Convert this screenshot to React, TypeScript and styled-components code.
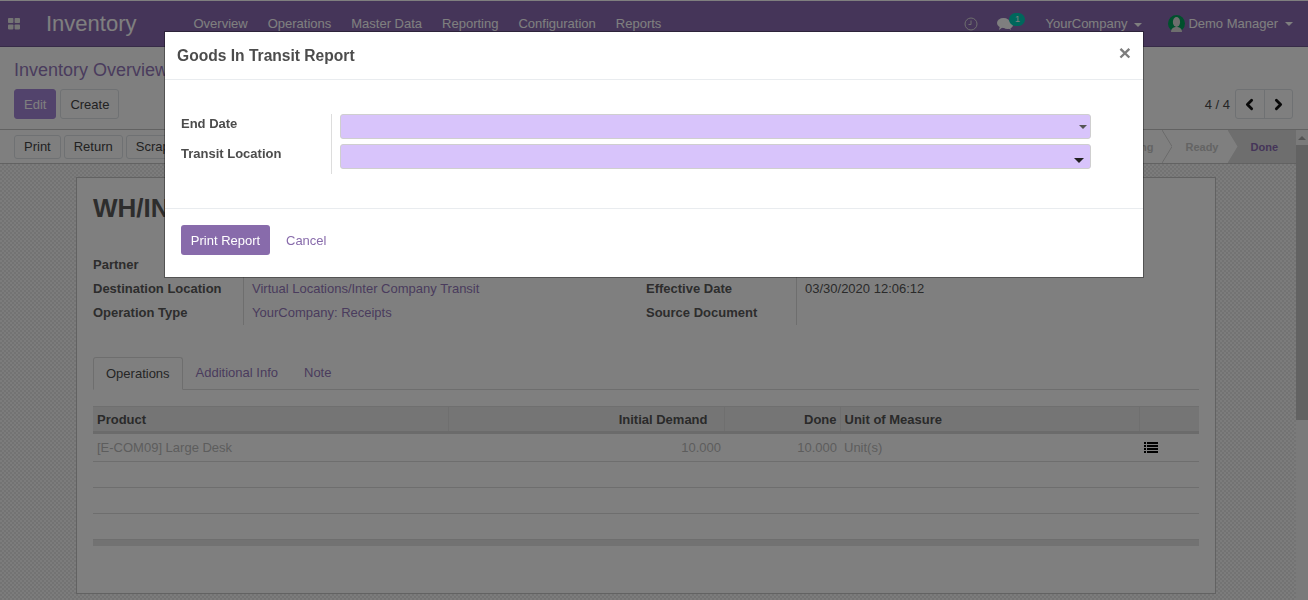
import React from "react";
import styled, { createGlobalStyle } from "styled-components";
import { ChevronLeft, ChevronRight } from "lucide-react";

const GlobalStyle = createGlobalStyle`
  html, body {
    margin: 0;
    height: 600px;
    overflow: hidden;
    background: #fff;
    font-family: "Liberation Sans", Arial, sans-serif;
    font-size: 13px;
    color: #4c4c4c;
  }
  * { box-sizing: border-box; }
`;

const Page = styled.div`
  display: flex;
  flex-direction: column;
  height: 600px;
  width: 1308px;
  overflow: hidden;
`;

const Navbar = styled.div`
  height: 46px;
  flex: none;
  margin-top: 1px;
  padding: 0 0 0 8px;
  display: flex;
  align-items: center;
  background: #8a6bb2;
  border-bottom: 1px solid #6f5690;
  color: #fff;
`;

const AppsIcon = styled.svg`
  width: 12px;
  height: 12px;
  fill: #e8e8e8;
  flex: none;
`;

const Brand = styled.div`
  font-size: 22px;
  margin-left: 26px;
  width: 147.5px;
`;

const MenuItem = styled.span`
  margin-right: 20px;
`;

const NavRight = styled.div`
  margin-left: auto;
  display: flex;
  align-items: center;
`;

const Caret = styled.span`
  display: inline-block;
  border-left: 4px solid transparent;
  border-right: 4px solid transparent;
  border-top: 4px solid currentColor;
  vertical-align: middle;
  margin-left: 7px;
`;

const ChatWrap = styled.span`
  position: relative;
  display: inline-flex;
  margin: 0 32px 0 19px;
`;

const Badge = styled.span`
  position: absolute;
  top: -4px;
  left: 12px;
  width: 16px;
  height: 13px;
  border-radius: 7px;
  background: #00ceb8;
  font-size: 9px;
  line-height: 13px;
  text-align: center;
`;

const NavCompany = styled.span`
  margin-right: 26px;
`;

const Avatar = styled.svg`
  width: 17px;
  height: 17px;
  margin-right: 3px;
  flex: none;
`;

const NavUser = styled.span`
  margin-right: 15px;
  display: flex;
  align-items: center;
`;

const ControlPanel = styled.div`
  flex: none;
  height: 83px;
  padding: 12px 15px 0 14px;
  border-bottom: 1px solid #c4c4c4;
  background: #fff;
`;

const Breadcrumb = styled.div`
  font-size: 18px;
  line-height: 22px;
  color: #9478bb;
`;

const PanelRow = styled.div`
  display: flex;
  align-items: center;
  margin-top: 8px;
`;

const Btn = styled.button<{ $primary?: boolean }>`
  height: 30px;
  padding: 0 9px;
  font: inherit;
  border-radius: 3px;
  margin-right: 4px;
  border: 1px solid ${(p) => (p.$primary ? "#a587d8" : "#dee2e6")};
  background: ${(p) => (p.$primary ? "#a587d8" : "#fff")};
  color: ${(p) => (p.$primary ? "#fff" : "#444")};
`;

const Pager = styled.div`
  margin-left: auto;
  display: flex;
  align-items: center;
  color: #4c4c4c;
`;

const PagerCount = styled.span`
  margin-right: 5px;
`;

const PagerGroup = styled.div`
  display: flex;
  width: 58px;
  height: 30px;
  border: 1px solid #dee2e6;
  border-radius: 3px;
`;

const PagerBtn = styled.div<{ $first?: boolean }>`
  flex: 1;
  display: flex;
  align-items: center;
  justify-content: center;
  border-right: ${(p) => (p.$first ? "1px solid #dee2e6" : "0")};
`;

const Main = styled.div`
  flex: 1;
  min-height: 0;
  display: flex;
`;

const Content = styled.div`
  flex: 1;
  min-width: 0;
  display: flex;
  flex-direction: column;
`;

const Scrollbar = styled.div`
  flex: none;
  width: 12px;
  background: #f5f5f5;
  padding-top: 6px;
`;

const ScrollArrow = styled.div`
  width: 0;
  height: 0;
  margin: 0 auto 5px;
  border-left: 4px solid transparent;
  border-right: 4px solid transparent;
  border-bottom: 4px solid #a8a8a8;
`;

const ScrollThumb = styled.div`
  height: 275px;
  background: #c4c4c4;
`;

const StatusRow = styled.div`
  flex: none;
  height: 34px;
  display: flex;
  align-items: center;
  padding-left: 14px;
  border-bottom: 1px solid #c4c4c4;
  background: #fff;
`;

const SmallBtn = styled.button`
  height: 24px;
  padding: 0 9px;
  font: inherit;
  border: 1px solid #dee2e6;
  border-radius: 3px;
  background: #fff;
  color: #444;
  margin-right: 3px;
`;

const StatusBar = styled.div`
  margin-left: auto;
  display: flex;
  height: 33px;
  font-size: 11px;
  font-weight: bold;
`;

const StatusStep = styled.div<{ $active?: boolean }>`
  position: relative;
  display: flex;
  align-items: center;
  padding: 0 ${(p) => (p.$active ? "18px" : "9px")} 0 23px;
  background: ${(p) => (p.$active ? "#dcdcdc" : "transparent")};
  color: ${(p) => (p.$active ? "#8a6bb2" : "#c8c8c8")};
  clip-path: ${(p) =>
    p.$active ? "polygon(0 0, 100% 0, 100% 100%, 0 100%, 10px 50%)" : "none"};
`;

const StepChevron = styled.svg`
  position: absolute;
  top: 0;
  right: -10px;
  width: 10px;
  height: 33px;
`;

const FormArea = styled.div`
  flex: 1;
  min-height: 0;
  padding: 13px 78px 0 76px;
  background-color: #f9f9f9;
  background-image: conic-gradient(#e6e6e6 25%, transparent 0 50%, #e6e6e6 0 75%, transparent 0);
  background-size: 4px 4px;
`;

const Sheet = styled.div`
  width: 1140px;
  height: 417px;
  padding: 0 16px;
  background: #fff;
  border: 1px solid #c4c4c4;
`;

const Title = styled.h1`
  margin: 14px 0 0;
  font-size: 26px;
  line-height: 33px;
  color: #5a5a5a;
`;

const Groups = styled.div`
  display: flex;
  margin-top: 28px;
`;

const Group = styled.div<{ $width: number }>`
  width: ${(p) => p.$width}px;
  display: grid;
  grid-template-columns: 151px 1fr;
  grid-auto-rows: 24px;
`;

const FieldLabel = styled.div`
  font-weight: bold;
  color: #5a5a5a;
  line-height: 24px;
  border-right: 1px solid #ddd;
`;

const FieldValue = styled.div`
  padding-left: 8px;
  line-height: 24px;
  color: #555;
`;

const FieldLink = styled(FieldValue)`
  color: #9478bb;
`;

const Tabs = styled.div`
  display: flex;
  margin-top: 32px;
  height: 33px;
  border-bottom: 1px solid #ddd;
`;

const Tab = styled.div<{ $active?: boolean }>`
  height: 33px;
  line-height: 32px;
  padding: 0 ${(p) => (p.$active ? "12px" : "13px")};
  color: ${(p) => (p.$active ? "#4c4c4c" : "#9478bb")};
  ${(p) =>
    p.$active
      ? "background:#fff;border:1px solid #ddd;border-bottom-color:#fff;border-radius:3px 3px 0 0;"
      : ""}
`;

const Table = styled.table`
  width: 1106px;
  margin-top: 16px;
  border-collapse: collapse;
  table-layout: fixed;
`;

const Th = styled.th<{ $right?: boolean; $sortPad?: boolean }>`
  height: 26px;
  padding: 0 ${(p) => (p.$sortPad ? "16px" : p.$right ? "3px" : "4px")} 0 4px;
  background: #ebebeb;
  border: 1px solid #dfdfdf;
  border-width: 1px 1px 3px 0;
  border-bottom-color: #d6d6d6;
  color: #555;
  font-size: 13px;
  text-align: ${(p) => (p.$right ? "right" : "left")};
  &:last-child { border-right: 0; }
`;

const Td = styled.td<{ $right?: boolean; $height?: number }>`
  height: ${(p) => p.$height ?? 26}px;
  padding: 0 ${(p) => (p.$right ? "3px" : "4px")} 0 4px;
  border-bottom: 1px solid #ddd;
  color: #bbb;
  text-align: ${(p) => (p.$right ? "right" : "left")};
`;

const ListIcon = styled.svg`
  display: block;
  margin-left: 1px;
  width: 14px;
  height: 11px;
  fill: #000;
`;

const TableFoot = styled.div`
  width: 1106px;
  height: 6px;
  background: #e4e4e4;
`;

const Overlay = styled.div`
  position: fixed;
  inset: 0;
  background: rgba(0, 0, 0, 0.5);
`;

const Modal = styled.div`
  position: fixed;
  top: 32px;
  left: 165px;
  width: 978px;
  height: 245px;
  background: #fff;
  box-shadow: 0 0 0 1px rgba(0, 0, 0, 0.35);
  display: flex;
  flex-direction: column;
`;

const ModalHeader = styled.div`
  flex: none;
  height: 48px;
  display: flex;
  align-items: center;
  justify-content: space-between;
  padding: 0 12px;
  border-bottom: 1px solid #e9ecef;
`;

const ModalTitle = styled.h4`
  margin: 0;
  font-size: 15.6px;
  font-weight: bold;
  color: #4c4c4c;
`;

const CloseBtn = styled.span`
  font-size: 21px;
  font-weight: bold;
  color: #7d7d7d;
  line-height: 1;
  margin-top: -6px;
`;

const ModalBody = styled.div`
  flex: none;
  height: 129px;
  padding: 34px 16px 0;
  display: grid;
  grid-template-columns: 151px 759px;
  grid-auto-rows: 30px;
  border-bottom: 1px solid #e9ecef;
`;

const ModalLabel = styled.div`
  font-weight: bold;
  color: #4c4c4c;
  line-height: 20px;
  border-right: 1px solid #ddd;
`;

const SelectCell = styled.div`
  padding-left: 8px;
`;

const SelectBox = styled.div`
  height: 25px;
  background: #d8c4fb;
  border: 1px solid #cfcfcf;
  border-radius: 3px;
  display: flex;
  align-items: center;
  justify-content: flex-end;
`;

const SelectCaret = styled.span<{ $dark?: boolean }>`
  width: 0;
  height: 0;
  border-left: ${(p) => (p.$dark ? 5 : 4)}px solid transparent;
  border-right: ${(p) => (p.$dark ? 5 : 4)}px solid transparent;
  border-top: ${(p) => (p.$dark ? 5 : 4)}px solid ${(p) => (p.$dark ? "#222" : "#555")};
  margin-right: ${(p) => (p.$dark ? 6 : 3)}px;
  margin-top: ${(p) => (p.$dark ? 7 : 1)}px;
`;

const ModalFooter = styled.div`
  flex: 1;
  display: flex;
  align-items: flex-start;
  padding: 16px 16px 0;
`;

const PrintBtn = styled.button`
  height: 30px;
  width: 89px;
  padding: 0;
  font: inherit;
  color: #fff;
  background: #886bab;
  border: 0;
  border-radius: 3px;
`;

const CancelLink = styled.span`
  margin-left: 16px;
  line-height: 31px;
  color: #886bab;
`;

const App = () => (
  <>
    <GlobalStyle />
    <Page>
      <Navbar>
        <AppsIcon viewBox="0 0 12 12">
          <rect x="0" y="0" width="5.4" height="5" rx="0.8" />
          <rect x="6.6" y="0" width="5.4" height="5" rx="0.8" />
          <rect x="0" y="6.4" width="5.4" height="5" rx="0.8" />
          <rect x="6.6" y="6.4" width="5.4" height="5" rx="0.8" />
        </AppsIcon>
        <Brand>Inventory</Brand>
        <MenuItem>Overview</MenuItem>
        <MenuItem>Operations</MenuItem>
        <MenuItem>Master Data</MenuItem>
        <MenuItem>Reporting</MenuItem>
        <MenuItem>Configuration</MenuItem>
        <MenuItem>Reports</MenuItem>
        <NavRight>
          <svg width="14" height="14" viewBox="0 0 14 14" fill="none" stroke="#ddd" strokeWidth="1">
            <circle cx="7" cy="7" r="6" />
            <path d="M7 3.500V7.500H4.500" />
          </svg>
          <ChatWrap>
            <svg width="16" height="14" viewBox="0 0 16 14" fill="#fff">
              <ellipse cx="6.500" cy="6" rx="6.500" ry="5" />
              <path d="M3 9l-1 4 4-3zM11 11l3 2-1-3z" />
              <ellipse cx="10.500" cy="8" rx="5.500" ry="4" />
            </svg>
            <Badge>1</Badge>
          </ChatWrap>
          <NavCompany>
            YourCompany
            <Caret />
          </NavCompany>
          <NavUser>
            <Avatar viewBox="0 0 17 17">
              <circle cx="8.500" cy="8.500" r="8.500" fill="#00a05a" />
              <ellipse cx="8.500" cy="7" rx="3.600" ry="5" fill="#ddd" />
              <path d="M3 17c0-4 3-5 5.500-5s5.500 1 5.500 5z" fill="#ddd" />
            </Avatar>
            Demo Manager
            <Caret />
          </NavUser>
        </NavRight>
      </Navbar>
      <ControlPanel>
        <Breadcrumb>Inventory Overview</Breadcrumb>
        <PanelRow>
          <Btn $primary>Edit</Btn>
          <Btn>Create</Btn>
          <Pager>
            <PagerCount>4 / 4</PagerCount>
            <PagerGroup>
              <PagerBtn $first>
                <ChevronLeft size={17} strokeWidth={4} color="#111" />
              </PagerBtn>
              <PagerBtn>
                <ChevronRight size={17} strokeWidth={4} color="#111" />
              </PagerBtn>
            </PagerGroup>
          </Pager>
        </PanelRow>
      </ControlPanel>
      <Main>
        <Content>
          <StatusRow>
            <SmallBtn>Print</SmallBtn>
            <SmallBtn>Return</SmallBtn>
            <SmallBtn>Scrap</SmallBtn>
            <StatusBar>
              <StatusStep>
                Waiting
                <StepChevron viewBox="0 0 10 33" fill="none" stroke="#d5d5d5">
                  <path d="M0 0L10 16.500L0 33" />
                </StepChevron>
              </StatusStep>
              <StatusStep>Ready</StatusStep>
              <StatusStep $active>Done</StatusStep>
            </StatusBar>
          </StatusRow>
          <FormArea>
            <Sheet>
              <Title>WH/IN/00004</Title>
              <Groups>
                <Group $width={553}>
                  <FieldLabel>Partner</FieldLabel>
                  <FieldLink />
                  <FieldLabel>Destination Location</FieldLabel>
                  <FieldLink>Virtual Locations/Inter Company Transit</FieldLink>
                  <FieldLabel>Operation Type</FieldLabel>
                  <FieldLink>YourCompany: Receipts</FieldLink>
                </Group>
                <Group $width={553}>
                  <FieldLabel>Scheduled Date</FieldLabel>
                  <FieldValue>03/30/2020 12:06:12</FieldValue>
                  <FieldLabel>Effective Date</FieldLabel>
                  <FieldValue>03/30/2020 12:06:12</FieldValue>
                  <FieldLabel>Source Document</FieldLabel>
                  <FieldValue />
                </Group>
              </Groups>
              <Tabs>
                <Tab $active>Operations</Tab>
                <Tab>Additional Info</Tab>
                <Tab>Note</Tab>
              </Tabs>
              <Table>
                <colgroup>
                  <col width="355" />
                  <col width="276" />
                  <col width="116" />
                  <col width="299" />
                  <col width="60" />
                </colgroup>
                <thead>
                  <tr>
                    <Th>Product</Th>
                    <Th $right $sortPad>Initial Demand</Th>
                    <Th $right>Done</Th>
                    <Th>Unit of Measure</Th>
                    <Th />
                  </tr>
                </thead>
                <tbody>
                  <tr>
                    <Td $height={29}>[E-COM09] Large Desk</Td>
                    <Td $right $height={29}>10.000</Td>
                    <Td $right $height={29}>10.000</Td>
                    <Td $height={29}>Unit(s)</Td>
                    <Td $height={29}>
                      <ListIcon viewBox="0 0 14 11">
                        <path d="M0 0h2v2H0zM3 0h11v2H3zM0 3h2v2H0zM3 3h11v2H3zM0 6h2v2H0zM3 6h11v2H3zM0 9h2v2H0zM3 9h11v2H3z" />
                      </ListIcon>
                    </Td>
                  </tr>
                  <tr>
                    <Td colSpan={5} />
                  </tr>
                  <tr>
                    <Td colSpan={5} />
                  </tr>
                  <tr>
                    <Td colSpan={5} />
                  </tr>
                </tbody>
              </Table>
              <TableFoot />
            </Sheet>
          </FormArea>
        </Content>
        <Scrollbar>
          <ScrollArrow />
          <ScrollThumb />
        </Scrollbar>
      </Main>
    </Page>
    <Overlay />
    <Modal>
      <ModalHeader>
        <ModalTitle>Goods In Transit Report</ModalTitle>
        <CloseBtn>×</CloseBtn>
      </ModalHeader>
      <ModalBody>
        <ModalLabel>End Date</ModalLabel>
        <SelectCell>
          <SelectBox>
            <SelectCaret />
          </SelectBox>
        </SelectCell>
        <ModalLabel>Transit Location</ModalLabel>
        <SelectCell>
          <SelectBox>
            <SelectCaret $dark />
          </SelectBox>
        </SelectCell>
      </ModalBody>
      <ModalFooter>
        <PrintBtn>Print Report</PrintBtn>
        <CancelLink>Cancel</CancelLink>
      </ModalFooter>
    </Modal>
  </>
);

export default App;
